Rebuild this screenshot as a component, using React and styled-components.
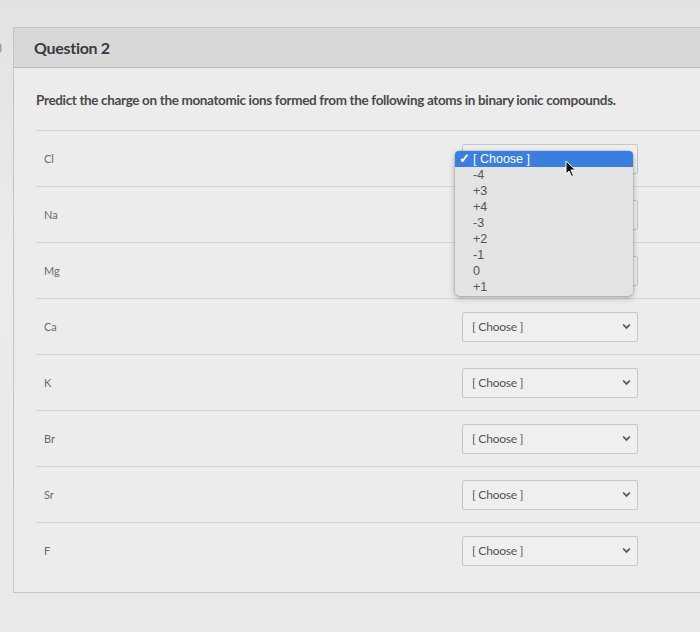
import React from 'react'
import styled, { createGlobalStyle } from 'styled-components'

const GlobalStyle = createGlobalStyle`
  html, body {
    margin: 0;
    padding: 0;
    background: #e4e4e4;
    overflow: hidden;
  }
  body {
    font-family: Lato, "Open Sans", sans-serif;
  }
`;

const Page = styled.div`
  position: relative;
  width: 700px;
  height: 632px;
  padding: 27px 0 0 13px;
  box-sizing: border-box;
  background: linear-gradient(180deg, #e2e2e2 0%, #ebebeb 40%, #e9e9e9 100%);
`;

const NavArc = styled.svg`
  position: absolute;
  left: -9px;
  top: 38px;
`;

const Card = styled.div`
  width: 720px;
  border: 1px solid #c4c4c4;
  border-right: none;
  background: #ececec;
`;

const Header = styled.div`
  height: 39px;
  display: flex;
  align-items: center;
  padding-left: 20px;
  background: #d8d8d8;
  border-bottom: 1px solid #b9b9b9;
`;

const Title = styled.h2`
  margin: 0;
  font-size: 16px;
  font-weight: 700;
  color: #3a3a3a;
  letter-spacing: -0.3px;
`;

const Body = styled.div`
  padding: 24px 0 14px 22px;
`;

const Prompt = styled.p`
  margin: 0 0 22px;
  font-size: 13.5px;
  font-weight: 700;
  color: #4a4a4a;
  letter-spacing: -0.35px;
`;

const Row = styled.div`
  position: relative;
  height: 55px;
  display: flex;
  align-items: center;
  border-top: 1px solid #d2d2d2;
  padding-left: 8px;
`;

const Label = styled.span`
  font-size: 11px;
  color: #6a6a6a;
`;

const SelectWrap = styled.div`
  position: relative;
  margin-left: auto;
  margin-right: 96px;
`;

const Select = styled.div`
  width: 176px;
  height: 30px;
  box-sizing: border-box;
  display: flex;
  align-items: center;
  justify-content: space-between;
  padding: 0 6px 0 9px;
  background: #efefef;
  border: 1px solid #c6c6c6;
  border-radius: 2px;
  font-size: 12px;
  color: #555;
  letter-spacing: -0.2px;
`;

const Menu = styled.div`
  position: absolute;
  left: -7px;
  top: 7px;
  z-index: 2;
  width: 178px;
  padding-bottom: 1px;
  background: #e3e3e3;
  border-radius: 5px;
  box-shadow: 0 2px 6px rgba(0, 0, 0, 0.28), 0 0 0 1px rgba(0, 0, 0, 0.08);
  font-family: "Liberation Sans", Arial, sans-serif;
  font-size: 12.5px;
`;

const Option = styled.div`
  height: 16px;
  line-height: 16px;
  padding-left: ${p => (p.active ? '4px' : '18px')};
  color: ${p => (p.active ? '#fff' : '#555')};
  background: ${p => (p.active ? '#3a7ee0' : 'transparent')};
  border-radius: ${p => (p.active ? '4px 4px 0 0' : '0')};
`;

const Check = styled.span`
  display: inline-block;
  width: 14px;
  font-weight: 700;
`;

const Cursor = styled.svg`
  position: absolute;
  left: 110px;
  top: 9px;
`;

const Chevron = () => (
  <svg width="9" height="7" viewBox="0 0 9 7">
    <path d="M1.2 1.5 L4.5 5 L7.8 1.5" fill="none" stroke="#555" strokeWidth="1.8" />
  </svg>
);

const atoms = ['Cl', 'Na', 'Mg', 'Ca', 'K', 'Br', 'Sr', 'F'];
const options = ['-4', '+3', '+4', '-3', '+2', '-1', '0', '+1'];

export default function App() {
  return (
    <>
      <GlobalStyle />
      <Page>
        <NavArc width="18" height="20" viewBox="0 0 18 20">
          <path d="M2 2 A8 8 0 0 1 2 18" fill="none" stroke="#9a9a9a" strokeWidth="1.5" />
        </NavArc>
        <Card>
          <Header>
            <Title>Question 2</Title>
          </Header>
          <Body>
            <Prompt>
              Predict the charge on the monatomic ions formed from the following atoms in binary ionic compounds.
            </Prompt>
            {atoms.map((atom, i) => (
              <Row key={atom}>
                <Label>{atom}</Label>
                <SelectWrap>
                  <Select>
                    <span>[ Choose ]</span>
                    <Chevron />
                  </Select>
                  {i === 0 && (
                    <Menu>
                      <Option active>
                        <Check>✓</Check>[ Choose ]
                      </Option>
                      {options.map(o => (
                        <Option key={o}>{o}</Option>
                      ))}
                      <Cursor width="12" height="18" viewBox="0 0 12 18">
                        <path d="M1 1 L1 14 L4 11 L6.5 16.5 L8.5 15.5 L6 10 L10.5 10 Z" fill="#111" stroke="#fff" strokeWidth="1" />
                      </Cursor>
                    </Menu>
                  )}
                </SelectWrap>
              </Row>
            ))}
          </Body>
        </Card>
      </Page>
    </>
  );
}
